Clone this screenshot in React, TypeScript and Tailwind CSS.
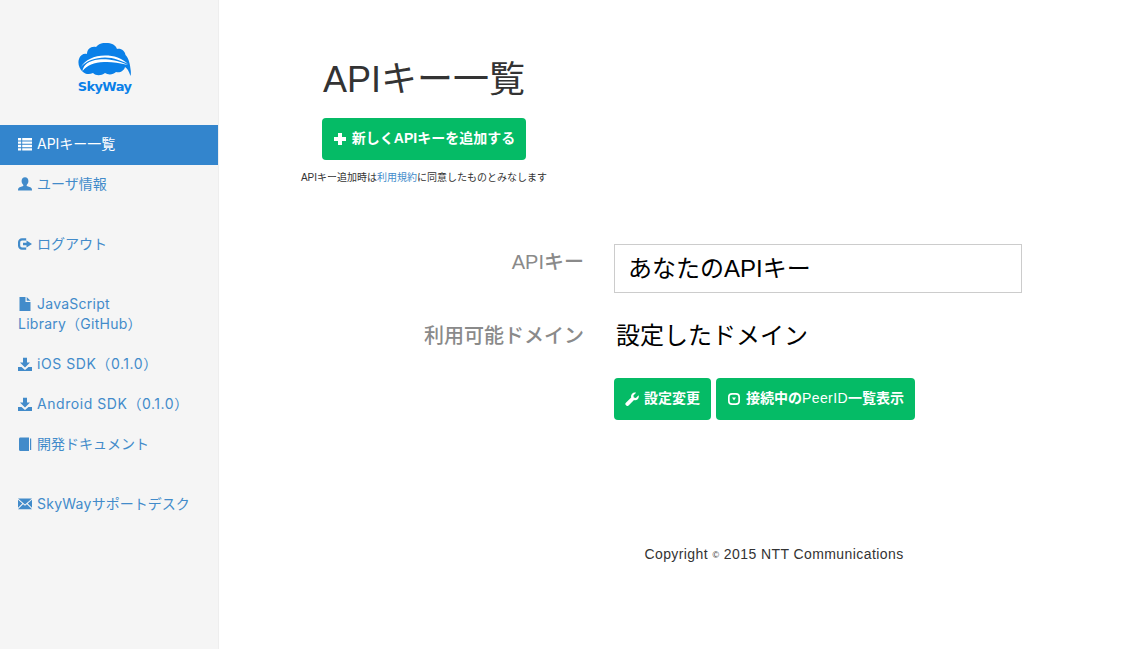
const FONT = "font-['Liberation_Sans','Noto_Sans_CJK_JP',sans-serif]";

function Glyph({ d, className = "" }: { d: string; className?: string }) {
  return (
    <svg viewBox="0 0 14 14" className={`inline-block w-[14px] h-[14px] fill-current shrink-0 ${className}`}>
      <path d={d} fillRule="evenodd" />
    </svg>
  );
}

const ICONS = {
  list: "M0 1h3.200v2.400H0zM4.200 1H14v2.400H4.200zM0 4.400h3.200v2.400H0zM4.200 4.400H14v2.400H4.200zM0 7.800h3.200v2.400H0zM4.200 7.800H14v2.400H4.200zM0 11.200h3.200v2.400H0zM4.200 11.200H14v2.400H4.200z",
  user: "M7 .3c2.100 0 3.400 1.700 3.400 3.800 0 1.600-.7 3-1.700 3.800v1.200c1.800.6 4.300 1.200 5 2.400.3.6.3 1.300.3 2H0c0-.7 0-1.400.3-2 .7-1.200 3.200-1.800 5-2.400V7.900C4.300 7.100 3.600 5.700 3.600 4.100 3.600 2 4.900.3 7 .3z",
  logout: "M4 1.200h4.200v2.200H4.200C3 3.400 2.200 4.200 2.200 5.400v3.200c0 1.200.8 2 2 2h4v2.200H4c-2.300 0-4-1.700-4-4V5.200c0-2.300 1.700-4 4-4zM8.500 3.500 14 7l-5.500 3.500V8.300H5V5.700h3.500z",
  file: "M1.500 0H7.500V5H12.500V14H1.500zM8.700 0 12.500 3.800H8.700z",
  download: "M5 .8h4v4.700h3L7 10.500 2 5.500h3zM0 10h3.500L7 13l3.500-3H14v4H0z",
  book: "M2.500 .5H11V14H2.500C1.500 14 1 13.400 1 12.500V2C1 1.100 1.500.5 2.500.5zM12 1.500h1.200V13H12z",
  envelope: "M0 1.500h14L7 7.500zM0 2.800 4.300 6.500 0 10.800zM14 2.800V10.800L9.700 6.500zM5.100 7.200 7 8.800 8.900 7.200 14 12.200H0z",
  plus: "M5 1h4v4h4v4H9v4H5V9H1V5h4z",
  wrench: "M13.600 3.200c.5 1.500.1 3-.9 4-1 1-2.400 1.300-3.700.9L3.600 13.500c-.7.700-1.700.7-2.300.1l-.5-.5c-.7-.7-.6-1.700.1-2.300L6.200 5.400c-.4-1.300-.1-2.700.9-3.700 1-1 2.500-1.400 4-.9L8.400 3.500l.4 2.100 2.100.4z",
  collapse: "M5 1h4c2.600 0 4 1.400 4 4v4c0 2.600-1.400 4-4 4H5c-2.600 0-4-1.400-4-4V5c0-2.600 1.400-4 4-4zM5.200 2.700C3.500 2.700 2.700 3.500 2.700 5.200v3.600c0 1.700.8 2.500 2.500 2.500h3.600c1.700 0 2.500-.8 2.500-2.500V5.200c0-1.700-.8-2.500-2.500-2.500zM5 5.600h4L7 8.400z",
};

const Logo = () => (
  <div className="flex flex-col items-center w-[209px]">
    <svg viewBox="0 0 54 36" className="w-[54px] h-[36px] block">
      <path
        fill="#0a80e8"
        d="M5 29C1 26-.5 20 1 16c1-4 5-6 8-5 0-5 4-8 9-7 3-4 8-4.500 12-4 5 .5 8 3 9 6 4-1 8 2 8.500 6 2.500 2 4.500 8 5 14 .5 3 .5 5 0 7-1.500-5-3.500-8-5.500-9-1 4-5 6-9 5-3 3-8 3-11 1-4 3-9 3-12 0-4 2-8 1-10-1z"
      />
      <path fill="#fff" d="M3 24C7 17 16 12.500 27 12.500c9 0 17 2.500 23 8.500-6-3-14-6.500-23-6.500C17 14.500 8 18 3 24z" />
      <path fill="#fff" d="M4.500 28C5 24 8 19 17 17c7-1.500 19-1.500 33 5-10-2.500-18-3.500-24-3C16 19.500 9 22 4.500 28z" />
    </svg>
    <span className="text-[13px] leading-[13px] font-bold text-[#0a80e8] font-['DejaVu_Sans',sans-serif] tracking-[-0.6px] mt-[1px]">SkyWay</span>
  </div>
);

function NavItem({ icon, children, active }: { icon: string; children: React.ReactNode; active?: boolean }) {
  return (
    <a className={`block px-[18px] pt-[9px] pb-[11px] text-[14px] leading-[20px] font-['Inter','Noto_Sans_CJK_JP',sans-serif] ${active ? "bg-[#3385cd] text-white" : "text-[#428bca]"}`}>
      <Glyph d={icon} className="align-[-2px] mr-[5px]" />{children}
    </a>
  );
}

const GreenBtn = ({ icon, children }: { icon: string; children: React.ReactNode }) => (
  <button className="flex items-center gap-[5px] h-[42px] px-[11px] pb-[1px] rounded-[4px] bg-[#05bb66] text-white text-[14px] font-bold whitespace-nowrap">
    <Glyph d={icon} />
    <span>{children}</span>
  </button>
);

export default function App() {
  return (
    <div className={`flex h-[649px] bg-white overflow-hidden ${FONT} text-[#333]`}>
      <aside className="w-[219px] shrink-0 bg-[#f5f5f5] border-r border-[#eeeeee] pt-[43px]">
        <Logo />
        <nav className="mt-[32px]">
          <NavItem icon={ICONS.list} active>APIキー一覧</NavItem>
          <NavItem icon={ICONS.user}>ユーザ情報</NavItem>
          <div className="h-[20px]" />
          <NavItem icon={ICONS.logout}>ログアウト</NavItem>
          <div className="h-[20px]" />
          <NavItem icon={ICONS.file}><span className="tracking-[0.25px]">JavaScript<br />Library（GitHub）</span></NavItem>
          <NavItem icon={ICONS.download}><span className="tracking-[0.55px]">iOS SDK（0.1.0）</span></NavItem>
          <NavItem icon={ICONS.download}><span className="tracking-[0.55px]">Android SDK（0.1.0）</span></NavItem>
          <NavItem icon={ICONS.book}>開発ドキュメント</NavItem>
          <div className="h-[20px]" />
          <NavItem icon={ICONS.envelope}><span className="tracking-[0.25px]">SkyWay</span>サポートデスク</NavItem>
        </nav>
      </aside>

      <main className="flex-1 min-w-0 pl-[82px]">
        <div className="w-[246px] flex flex-col items-center pt-[58px]">
          <h1 className="text-[36px] leading-[44px] font-normal whitespace-nowrap">APIキー一覧</h1>
          <div className="mt-[16px]">
            <GreenBtn icon={ICONS.plus}>新しくAPIキーを追加する</GreenBtn>
          </div>
          <p className="mt-[11px] text-[10px] leading-[14px] whitespace-nowrap">
            APIキー追加時は<a className="text-[#428bca]">利用規約</a>に同意したものとみなします
          </p>
        </div>

        <div className="mt-[59px] ml-[123px] flex flex-col">
          <div className="flex items-start">
            <label className="w-[160px] text-right text-[20px] leading-[36px] text-[#8a8a8a] font-medium pt-0">APIキー</label>
            <div className="ml-[30px] w-[408px] h-[49px] border border-[#cccccc] flex items-center pl-[13px] text-[24px] text-black">
              あなたのAPIキー
            </div>
          </div>
          <div className="flex items-center mt-[25px]">
            <label className="w-[160px] text-right text-[20px] leading-[36px] text-[#8a8a8a] font-medium">利用可能ドメイン</label>
            <div className="ml-[32px] text-[24px] leading-[36px] text-black">設定したドメイン</div>
          </div>
          <div className="flex gap-[5px] ml-[190px] mt-[24px]">
            <GreenBtn icon={ICONS.wrench}>設定変更</GreenBtn>
            <GreenBtn icon={ICONS.collapse}>接続中の<span className="font-normal tracking-[0.4px]">PeerID</span>一覧表示</GreenBtn>
          </div>
        </div>

        <p className="mt-[124px] ml-[273px] w-[400px] text-center text-[14px] leading-[20px] tracking-[0.42px] text-[#333]">
          Copyright <span className="text-[9px] align-[1px]">©</span> 2015 NTT Communications
        </p>
      </main>
    </div>
  );
}
